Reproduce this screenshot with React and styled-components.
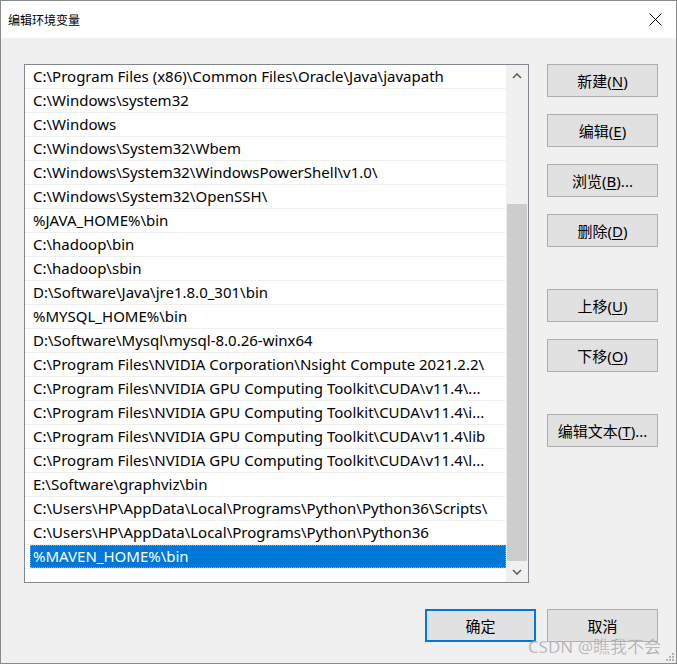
import React from "react";
import styled, { createGlobalStyle } from "styled-components";

const GlobalStyle = createGlobalStyle`
  html, body {
    margin: 0;
    padding: 0;
    background: #ffffff;
  }
  * {
    box-sizing: border-box;
  }
`;

const FONT = `"Noto Sans", "Noto Sans CJK SC", sans-serif`;

const Window = styled.div`
  position: relative;
  width: 677px;
  height: 664px;
  border: 1px solid #8a8a8a;
  display: flex;
  flex-direction: column;
  font-family: ${FONT};
  color: #000;
  overflow: hidden;
`;

const TitleBar = styled.div`
  height: 37px;
  background: #fff;
  display: flex;
  align-items: center;
  justify-content: space-between;
  padding: 0 14px 0 7px;
`;

const Title = styled.div`
  font-size: 12px;
  font-family: "Noto Sans CJK SC", sans-serif;
`;

const CloseBox = styled.div`
  width: 14px;
  height: 14px;
  display: flex;
  align-items: center;
  justify-content: center;
`;

const Body = styled.div`
  flex: 1;
  background: #f0f0f0;
  padding: 26px 18px 0 23px;
`;

const Main = styled.div`
  display: flex;
  gap: 18px;
`;

const ListBox = styled.div`
  width: 505px;
  height: 519px;
  border: 1px solid #828790;
  background: #fff;
  display: flex;
`;

const Rows = styled.div`
  flex: 1;
  overflow: hidden;
`;

const Row = styled.div`
  height: 24px;
  border-bottom: 1px solid #f0f0f0;
  display: flex;
`;

const Label = styled.div`
  flex: 1;
  margin-left: 5px;
  padding-left: 3px;
  font-size: 15px;
  line-height: 22px;
  white-space: nowrap;
  overflow: hidden;
  background: ${(p) => (p.$selected ? "#0078d7" : "transparent")};
  color: ${(p) => (p.$selected ? "#fff" : "#000")};
  outline: ${(p) => (p.$selected ? "1px dotted #ff8728" : "none")};
  outline-offset: -1px;
`;

const ScrollBar = styled.div`
  width: 22px;
  background: #f0f0f0;
  display: flex;
  flex-direction: column;
`;

const ArrowBox = styled.div`
  height: 21px;
  display: flex;
  align-items: center;
  justify-content: center;
`;

const Track = styled.div`
  flex: 1;
  display: flex;
  flex-direction: column;
  justify-content: flex-end;
  padding: 0 1px;
`;

const Thumb = styled.div`
  background: #cdcdcd;
`;

const ButtonColumn = styled.div`
  display: flex;
  flex-direction: column;
  gap: 42px;
`;

const ButtonGroup = styled.div`
  display: flex;
  flex-direction: column;
  gap: 17px;
`;

const Button = styled.button`
  width: 111px;
  height: 33px;
  margin: 0;
  padding: 0;
  background: #e1e1e1;
  border: ${(p) => (p.$primary ? "2px solid #0078d7" : "1px solid #adadad")};
  font-family: ${FONT};
  font-size: 15px;
  color: #000;
  display: flex;
  align-items: center;
  justify-content: center;
  u {
    text-decoration-thickness: 1px;
    text-underline-offset: 2px;
  }
`;

const Footer = styled.div`
  margin-top: 26px;
  display: flex;
  justify-content: flex-end;
  gap: 11px;
`;

const Watermark = styled.div`
  position: absolute;
  right: 15px;
  bottom: 5px;
  font-family: "Noto Sans", "Noto Sans CJK SC", sans-serif;
  font-size: 17px;
  color: rgba(150, 150, 150, 0.75);
  -webkit-text-stroke: 0.3px rgba(255, 255, 255, 0.6);
  pointer-events: none;
`;

const Grip = styled.div`
  position: absolute;
  right: 1px;
  bottom: 1px;
  width: 10px;
  height: 10px;
  display: flex;
`;

const paths = [
  "C:\\Program Files (x86)\\Common Files\\Oracle\\Java\\javapath",
  "C:\\Windows\\system32",
  "C:\\Windows",
  "C:\\Windows\\System32\\Wbem",
  "C:\\Windows\\System32\\WindowsPowerShell\\v1.0\\",
  "C:\\Windows\\System32\\OpenSSH\\",
  "%JAVA_HOME%\\bin",
  "C:\\hadoop\\bin",
  "C:\\hadoop\\sbin",
  "D:\\Software\\Java\\jre1.8.0_301\\bin",
  "%MYSQL_HOME%\\bin",
  "D:\\Software\\Mysql\\mysql-8.0.26-winx64",
  "C:\\Program Files\\NVIDIA Corporation\\Nsight Compute 2021.2.2\\",
  "C:\\Program Files\\NVIDIA GPU Computing Toolkit\\CUDA\\v11.4\\...",
  "C:\\Program Files\\NVIDIA GPU Computing Toolkit\\CUDA\\v11.4\\i...",
  "C:\\Program Files\\NVIDIA GPU Computing Toolkit\\CUDA\\v11.4\\lib",
  "C:\\Program Files\\NVIDIA GPU Computing Toolkit\\CUDA\\v11.4\\l...",
  "E:\\Software\\graphviz\\bin",
  "C:\\Users\\HP\\AppData\\Local\\Programs\\Python\\Python36\\Scripts\\",
  "C:\\Users\\HP\\AppData\\Local\\Programs\\Python\\Python36",
  "%MAVEN_HOME%\\bin",
];

const Chevron = ({ up }) => (
  <svg width="10" height="6" viewBox="0 0 10 6">
    <polyline
      points={up ? "1,5 5,1 9,5" : "1,1 5,5 9,1"}
      fill="none"
      stroke="#606060"
      strokeWidth="1.6"
    />
  </svg>
);

function App() {
  const selected = paths.length - 1;
  return (
    <>
      <GlobalStyle />
      <Window>
        <TitleBar>
          <Title>编辑环境变量</Title>
          <CloseBox>
            <svg width="13" height="13" viewBox="0 0 13 13">
              <path d="M0.5 0.5 L12.5 12.5 M12.5 0.5 L0.5 12.5" stroke="#000" strokeWidth="1" />
            </svg>
          </CloseBox>
        </TitleBar>
        <Body>
          <Main>
            <ListBox>
              <Rows>
                {paths.map((p, i) => (
                  <Row key={i}>
                    <Label $selected={i === selected}>{p}</Label>
                  </Row>
                ))}
              </Rows>
              <ScrollBar>
                <ArrowBox>
                  <Chevron up />
                </ArrowBox>
                <Track>
                  <Thumb style={{ height: 357 }} />
                </Track>
                <ArrowBox>
                  <Chevron />
                </ArrowBox>
              </ScrollBar>
            </ListBox>
            <ButtonColumn>
              <ButtonGroup>
                <Button>新建(<u>N</u>)</Button>
                <Button>编辑(<u>E</u>)</Button>
                <Button>浏览(<u>B</u>)...</Button>
                <Button>删除(<u>D</u>)</Button>
              </ButtonGroup>
              <ButtonGroup>
                <Button>上移(<u>U</u>)</Button>
                <Button>下移(<u>O</u>)</Button>
              </ButtonGroup>
              <ButtonGroup>
                <Button>编辑文本(<u>T</u>)...</Button>
              </ButtonGroup>
            </ButtonColumn>
          </Main>
          <Footer>
            <Button $primary>确定</Button>
            <Button>取消</Button>
          </Footer>
        </Body>
        <Watermark>CSDN @瞧我不会</Watermark>
        <Grip>
          <svg width="10" height="10" viewBox="0 0 10 10">
            {[
              [8, 2], [8, 5], [8, 8], [5, 5], [5, 8], [2, 8],
            ].map(([x, y], i) => (
              <rect key={i} x={x - 1} y={y - 1} width="2" height="2" fill="#b4b4b4" />
            ))}
          </svg>
        </Grip>
      </Window>
    </>
  );
}

export default App;
